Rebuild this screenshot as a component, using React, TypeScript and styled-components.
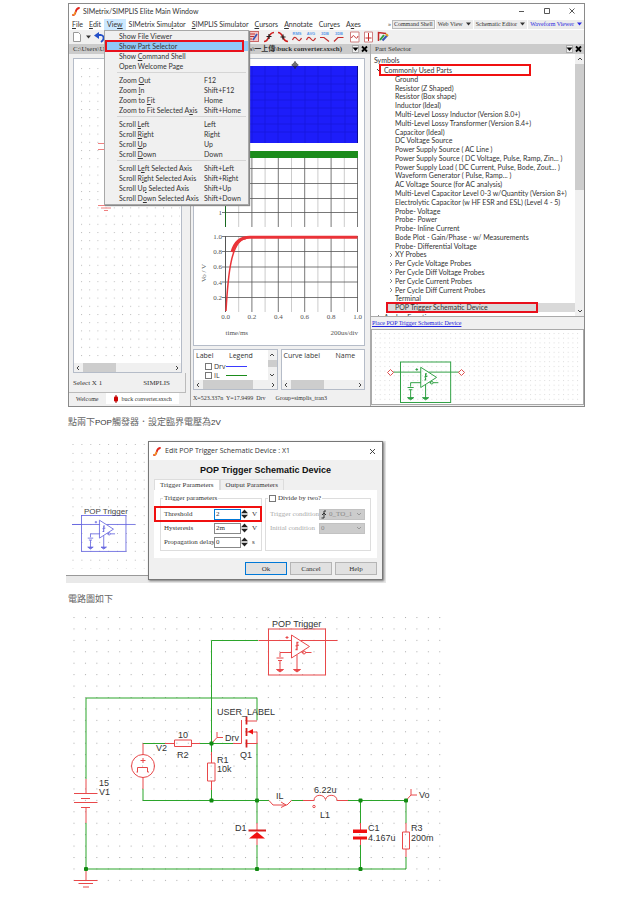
import React from "react";
import styled, { createGlobalStyle, css } from "styled-components";

const SANS = 'Lato, "Open Sans", sans-serif';
const WIDE_SANS = '"Open Sans", "Noto Sans", sans-serif';
const SERIF = '"Liberation Serif", "Noto Sans CJK TC", serif';
const ARIAL = '"Liberation Sans", "Noto Sans CJK TC", sans-serif';

const GlobalStyle = createGlobalStyle`
  * { box-sizing: border-box; }
  body { margin: 0; background: #fff; font-family: ${SANS}; font-size: 7px; color: #333; }
  button, input, select { font: inherit; color: inherit; margin: 0; padding: 0; border: 0; background: none; border-radius: 0; }
  svg { display: block; }
`;

/* ---------- article ---------- */

const Article = styled.main`
  padding: 3px 53px 0 66px;
`;

const Paragraph = styled.p`
  margin: 0 0 0 2px;
  font-family: ${ARIAL};
  font-size: 9px;
  line-height: 12px;
  color: #666;
  padding: ${(p: { $top: number; $bottom: number }) => `${p.$top}px 0 ${p.$bottom}px`};
`;

const Latin = styled.span`
  font-size: 8px;
  color: #333;
`;

/* ---------- main window ---------- */

const AppWindow = styled.figure`
  margin: 0 0 0 2px;
  border: 1px solid #8a8a8a;
  background: #f0f0f0;
`;

const TitleBar = styled.header`
  display: flex;
  align-items: center;
  height: 14px;
  padding: 0 8px 0 3px;
  gap: 3px;
  background: #fff;
`;

const TitleText = styled.span`
  flex: 1;
  line-height: 10px;
  white-space: nowrap;
`;

const WindowButtons = styled.div`
  display: flex;
  gap: 17px;
`;

const IconButton = styled.button`
  display: block;
  flex: none;
`;

const MenuBar = styled.nav`
  display: flex;
  align-items: center;
  height: 12px;
  background: #fff;
  line-height: 10px;
`;

const MenuSlot = styled.div`
  position: relative;
`;

const MenuButton = styled.button<{ $open?: boolean }>`
  display: block;
  height: 11px;
  padding: 0 3px;
  white-space: nowrap;
  background: ${(p) => (p.$open ? "#cce8ff" : "transparent")};
`;

const DropMenu = styled.div`
  position: absolute;
  z-index: 2;
  top: 11px;
  left: 0;
  width: 145px;
  padding: 0 0 1px;
  background: #f0f0f0;
  border: 1px solid #a8a8a8;
  box-shadow: 1px 1px 1px #888;
`;

const MenuItem = styled.button<{ $active?: boolean }>`
  position: relative;
  display: grid;
  grid-template-columns: 85px 1fr;
  width: 100%;
  height: 10px;
  padding-left: 14px;
  line-height: 10px;
  text-align: left;
  white-space: nowrap;
  background: ${(p) => (p.$active ? "#91c9f7" : "transparent")};
`;

const Divider = styled.hr`
  height: 1px;
  margin: 1px 2px 2px 12px;
  border: 0;
  background: #d5d5d5;
`;

const Callout = styled.span<{ $right: string; $left?: number; $color?: string }>`
  position: absolute;
  top: -1px;
  bottom: -1px;
  left: ${(p) => p.$left ?? 0}px;
  right: ${(p) => p.$right};
  border: 2px solid ${(p) => p.$color ?? "#e8101c"};
  pointer-events: none;
`;

const ViewSwitches = styled.div`
  display: flex;
  align-items: center;
  gap: 1px;
  margin-left: auto;
  font-family: ${SERIF};
  font-size: 6px;
  line-height: 8px;
`;

const ViewSwitch = styled.button<{ $blue?: boolean; $boxed?: boolean }>`
  display: flex;
  align-items: center;
  gap: 3px;
  height: 9px;
  padding: 0 1px;
  white-space: nowrap;
  background: #ececec;
  border: 1px solid ${(p) => (p.$boxed ? "#bbb" : "#ececec")};
  color: ${(p) => (p.$blue ? "#2a2ae0" : "#333")};
`;

const ToolBar = styled.div`
  display: flex;
  align-items: center;
  height: 14px;
  padding-left: 3px;
  gap: 2px;
`;

const ToolGroup = styled.div<{ $before?: number }>`
  display: flex;
  align-items: center;
  gap: 2px;
  margin-left: ${(p) => p.$before ?? 0}px;
`;

const Workspace = styled.div`
  display: grid;
  grid-template-columns: minmax(0, 121fr) minmax(0, 180fr) minmax(0, 214fr);
`;

const Pane = styled.section<{ $line?: boolean }>`
  display: flex;
  flex-direction: column;
  min-width: 0;
  ${(p) => p.$line && css`border-left: 1px solid #aaa;`}
`;

const PaneHeader = styled.div<{ $bold?: boolean }>`
  display: flex;
  align-items: center;
  justify-content: flex-end;
  height: 10px;
  padding: 0 2px 0 4px;
  gap: 2px;
  overflow: hidden;
  background: #cbcbcb;
  font-family: ${SERIF};
  font-weight: ${(p) => (p.$bold ? 700 : 400)};
  line-height: 10px;
  white-space: nowrap;
`;

const PaneTitle = styled.span<{ $grow?: boolean; $end?: number }>`
  flex: ${(p) => (p.$grow ? 1 : "none")};
  margin-right: ${(p) => p.$end ?? 0}px;
`;

const Sheet = styled.div`
  margin: 4px 8px 0 4px;
  border: 1px solid #b5bcc8;
  background: #fff;
`;

const HScroll = styled.div`
  display: flex;
  align-items: center;
  height: 9px;
  gap: 2px;
  padding: 0 1px;
  background: #f0f0f0;
`;

const HTrack = styled.div`
  flex: 1;
  height: 100%;
`;

const HThumb = styled.div<{ $share: number }>`
  width: ${(p) => p.$share}%;
  height: 100%;
  background: #cdcdcd;
`;

const StatusRow = styled.div`
  display: flex;
  align-items: center;
  justify-content: space-between;
  height: 20px;
  padding: 0 15px 0 4px;
  margin-right: 4px;
  border: solid #bbb;
  border-width: 0 1px 1px 0;
  font-family: ${SERIF};
`;

const FileTabs = styled.div`
  display: flex;
  height: 11px;
  align-items: stretch;
  font-family: ${SERIF};
  font-size: 6px;
`;

const FileTab = styled.button<{ $active?: boolean }>`
  display: flex;
  align-items: center;
  gap: 3px;
  padding: 0 7px;
  white-space: nowrap;
  background: ${(p) => (p.$active ? "#fff" : "transparent")};
`;

const PlotSheet = styled.div`
  margin: 4px 5px 0 2px;
  border: 1px solid #b5bcc8;
  background: #fff;
`;

const Legends = styled.div`
  display: grid;
  grid-template-columns: 1fr 1fr;
  gap: 3px;
  margin: 3px 5px 0 2px;
`;

const LegendBox = styled.div`
  display: flex;
  flex-direction: column;
  height: 41px;
  border: 1px solid #b5bcc8;
  background: #fff;
  font-family: ${WIDE_SANS};
`;

const LegendMain = styled.div`
  display: flex;
  flex: 1;
  min-height: 0;
`;

const LegendTable = styled.div`
  flex: 1;
  padding-left: 2px;
`;

const LegendHead = styled.div<{ $first: number }>`
  display: grid;
  grid-template-columns: ${(p) => p.$first}px 1fr;
  height: 12px;
  line-height: 12px;
  white-space: nowrap;
`;

const LegendRow = styled.label`
  display: grid;
  grid-template-columns: 8px 11px 21px;
  align-items: center;
  gap: 1px;
  height: 9px;
  padding-left: 9px;
  line-height: 9px;
`;

const Check = styled.input`
  appearance: none;
  flex: none;
  width: 7px;
  height: 7px;
  border: 1px solid #777;
  background: #fff;
`;

const LegendLine = styled.span<{ $color: string }>`
  height: 1px;
  background: ${(p) => p.$color};
`;

const VScroll = styled.div`
  display: flex;
  flex-direction: column;
  align-items: center;
  justify-content: space-between;
  width: 9px;
  flex: none;
  padding: 2px 0;
  background: #f0f0f0;
`;

const VTrack = styled.div`
  flex: 1;
  width: 100%;
  margin: 2px 0;
`;

const VThumb = styled.div<{ $share: number }>`
  height: ${(p) => p.$share}%;
  background: #cdcdcd;
`;

const CoordRow = styled.div`
  display: flex;
  gap: 10px;
  align-items: center;
  height: 16px;
  padding-left: 2px;
  font-family: ${SERIF};
  font-size: 6px;
  white-space: nowrap;
`;

const TreeFrame = styled.div`
  display: flex;
  height: 263px;
  background: #fff;
  border-bottom: 1px solid #aaa;
`;

const Tree = styled.div`
  flex: 1;
  min-width: 0;
  overflow: hidden;
  padding: 1px 0 0 2px;
  line-height: 9px;
`;

const TreeTop = styled.div`
  height: 10px;
  padding-left: 1px;
  line-height: 11px;
`;

const TreeGroup = styled.button`
  position: relative;
  display: flex;
  align-items: center;
  width: 100%;
  height: 10px;
  gap: 2px;
  padding-left: 3px;
  line-height: 10px;
`;

const TreeRows = styled.div`
  display: grid;
  grid-auto-rows: 1fr;
  height: 237px;
`;

const TreeRow = styled.button<{ $on?: boolean }>`
  position: relative;
  display: flex;
  align-items: center;
  min-height: 0;
  gap: 3px;
  margin-left: 15px;
  text-align: left;
  white-space: nowrap;
  background: ${(p) => (p.$on ? "#d9d9d9" : "transparent")};
`;

const Twist = styled.span`
  flex: none;
  width: 4px;
`;

const PlaceLink = styled.a`
  height: 12px;
  padding-left: 1px;
  font-family: ${SERIF};
  font-size: 6px;
  line-height: 12px;
  color: #2222dd;
`;

const Preview = styled.div`
  border: 1px solid #aaa;
  background: #fff;
`;

/* ---------- dialog ---------- */

const DialogFigure = styled.figure`
  display: grid;
  grid-template-columns: 82fr 235fr;
  max-width: 320px;
  margin: 0;
  padding: 0 3px 3px 0;
  background: #e9e9e9;
`;

const Board = styled.div`
  background: #fff;
  border-bottom: 1px solid #999;
  margin-bottom: 4px;
`;

const Dialog = styled.form`
  border: 1px solid #777;
  background: #f0f0f0;
  box-shadow: 1px 1px 2px #777;
  font-family: ${SERIF};
`;

const DialogTitle = styled.header`
  display: flex;
  align-items: center;
  height: 18px;
  gap: 4px;
  padding: 0 6px 0 4px;
  background: #fff;
  font-family: ${WIDE_SANS};
`;

const DialogHeading = styled.h2`
  margin: 0;
  height: 19px;
  font: 700 9px/20px ${ARIAL};
  color: #111;
  text-align: center;
`;

const Tabs = styled.div`
  display: flex;
  height: 11px;
  padding-left: 5px;
`;

const Tab = styled.button<{ $on?: boolean }>`
  padding: 0 5px;
  border: 1px solid #ddd;
  border-bottom: 0;
  white-space: nowrap;
  background: ${(p) => (p.$on ? "#fff" : "#f0f0f0")};
`;

const TabPanel = styled.div`
  display: grid;
  grid-template-columns: 102fr 106fr;
  gap: 3px;
  height: 68px;
  margin: 0 5px;
  padding: 4px 6px 7px;
  background: #fff;
`;

const Group = styled.fieldset`
  min-width: 0;
  margin: 0;
  padding: 4px 0 0;
  border: 1px solid #ddd;
`;

const Legend = styled.legend`
  display: flex;
  align-items: center;
  gap: 2px;
  height: 9px;
  margin-left: 2px;
  padding: 0 1px;
  line-height: 9px;
`;

const LegendLabel = styled.label`
  display: flex;
  align-items: center;
  gap: 2px;
`;

const Field = styled.label`
  position: relative;
  display: grid;
  grid-template-columns: 50px 27px 7px 1fr;
  align-items: center;
  height: 14px;
  padding-left: 3px;
  white-space: nowrap;
`;

const Entry = styled.input<{ $focus?: boolean }>`
  width: 27px;
  height: 11px;
  border: 1px solid ${(p) => (p.$focus ? "#0078d7" : "#888")};
  background: #fff;
  padding-left: 1px;
`;

const Unit = styled.span`
  padding-left: 4px;
`;

const Choice = styled.label`
  display: grid;
  grid-template-columns: 49px 1fr;
  align-items: center;
  height: 14px;
  padding: 0 5px 0 4px;
  color: #aaa;
  white-space: nowrap;
`;

const SelectWrap = styled.span`
  position: relative;
  display: flex;
  align-items: center;
  justify-content: flex-end;
  height: 11px;
  padding-right: 2px;
  background: #ccc;
  border: 1px solid #c2c2c2;
  color: #888;
`;

const Select = styled.select<{ $indent?: boolean }>`
  appearance: none;
  flex: 1;
  min-width: 0;
  height: 9px;
  padding-left: ${(p) => (p.$indent ? 2 : 1)}px;
  line-height: 9px;
  opacity: 1;
`;

const Buttons = styled.div`
  display: flex;
  justify-content: flex-end;
  gap: 3px;
  padding: 4px 5px;
`;

const PushButton = styled.button<{ $primary?: boolean }>`
  width: 42px;
  height: 13px;
  background: #e1e1e1;
  border: 1px solid ${(p) => (p.$primary ? "#0078d7" : "#b5b5b5")};
`;

const Circuit = styled.svg`
  width: 100%;
  max-width: 384px;
  font-family: ${ARIAL};
  font-size: 9px;
`;

const Drawing = styled.svg`
  width: 100%;
  font-family: ${(p: { $serif?: boolean }) => (p.$serif ? SERIF : ARIAL)};
`;

/* ---------- icons ---------- */

const Logo = () => (
  <svg width="8" height="9" viewBox="0 0 8 9" fill="none" strokeLinecap="round">
    <path d="M1 8C5 8 2 2 7 1" stroke="#e0251b" strokeWidth="1.8" />
    <path d="M1 8C3 8 3 6 3.4 5" stroke="#f5a623" strokeWidth="1.2" />
  </svg>
);

const Chevron = ({ dir, color = "#444" }: { dir: "left" | "right" | "up" | "down"; color?: string }) => {
  const d = { left: "M4 1L2 3L4 5", right: "M2 1L4 3L2 5", up: "M1 4L3 2L5 4", down: "M1 2L3 4L5 2" }[dir];
  return (
    <svg width="6" height="6" viewBox="0 0 6 6" fill="none" stroke={color}>
      <path d={d} />
    </svg>
  );
};

const Caret = () => (
  <svg width="5" height="4" viewBox="0 0 5 4">
    <path d="M0 .5H5L2.5 3.5Z" fill="currentColor" />
  </svg>
);

const PaneMenuIcon = () => (
  <svg width="7" height="8" viewBox="0 0 7 8">
    <rect x=".5" y=".5" width="6" height="7" fill="#eee" stroke="#aaa" />
    <path d="M.5 2.5H6.5L3.5 6Z" fill="#000" />
  </svg>
);

const PaneCloseIcon = () => (
  <svg width="7" height="8" viewBox="0 0 7 8" stroke="#000" strokeWidth="1.8">
    <path d="M1 1.5L6 6.5M6 1.5L1 6.5" />
  </svg>
);

const tool = { width: 12, height: 12, viewBox: "0 0 12 12", fill: "none" } as const;

const CurveTag = ({ tag, d }: { tag: string; d: string }) => (
  <svg {...tool}>
    <text x="6" y="4" fontSize="4" fontWeight="700" textAnchor="middle" fontFamily="Liberation Sans" fill="#5b9be8">
      {tag}
    </text>
    <path d={d} stroke="#c22a2a" strokeWidth="1.2" />
  </svg>
);

const SINE = "M1.5 9C3 5.5 4.5 6 6 8S9 10.5 10.5 7";

/* ---------- schematic symbols ---------- */

const PopSymbol = ({ color, x, y, scale = 1 }: { color: string; x: number; y: number; scale?: number }) => (
  <g transform={`translate(${x} ${y}) scale(${scale})`} fill="none" stroke={color} strokeWidth={1 / Math.max(scale, 0.9)}>
    <rect x="0" y="0" width="57" height="46" />
    <path d="M-10 11.5H23M32 11.5H69" />
    <path d="M23 6V29L41 17.5ZM17 8.5H20M18.5 7V10" />
    <path d="M23 23.5H11.5V28M8 29H15M9.5 31.5H13.5M11.5 31.5V41M28.5 26V41M33 23.5H35M37 23.5H43" />
    <circle cx="35.5" cy="23.5" r="1.5" />
    <path d="M30 13.5H28.5V20.5H27M27 17L30.5 16" strokeWidth="1.3" />
    <path d="M8 40.5H15L11.5 43ZM25 40.5H32L28.5 43Z" fill={color} />
  </g>
);

const Dots = ({ id, x, y, step, color = "#aaa" }: { id: string; x: number; y: number; step: number; color?: string }) => (
  <pattern id={id} x={x} y={y} width={step} height={step} patternUnits="userSpaceOnUse">
    <rect width="1" height="1" fill={color} />
  </pattern>
);

/* ---------- data ---------- */

const menuGroups: [string, string, string?][][] = [
  [["Show ", "F|ile Viewer"], ["Show ", "P|art Selector"], ["Show ", "C|ommand Shell"], ["Open Welcome Page", "|"]],
  [["Zoom ", "O|ut", "F12"], ["Zoom ", "I|n", "Shift+F12"], ["Zoom to ", "F|it", "Home"], ["Zoom to Fit Selected A", "x|is", "Shift+Home"]],
  [["Scroll ", "L|eft", "Left"], ["Scroll ", "R|ight", "Right"], ["Scroll ", "U|p", "Up"], ["Scroll ", "D|own", "Down"]],
  [["Scroll L", "e|ft Selected Axis", "Shift+Left"], ["Scroll R", "i|ght Selected Axis", "Shift+Right"], ["Scroll U", "p| Selected Axis", "Shift+Up"], ["Scroll D", "o|wn Selected Axis", "Shift+Down"]],
];

const Mnemonic = ({ before, rest }: { before: string; rest: string }) => {
  const [key, after] = rest.split("|");
  return (
    <span>
      {before}
      <u>{key}</u>
      {after}
    </span>
  );
};

const parts = [
  "Ground", "Resistor (Z Shaped)", "Resistor (Box shape)", "Inductor (Ideal)",
  "Multi-Level Lossy Inductor (Version 8.0+)", "Multi-Level Lossy Transformer (Version 8.4+)",
  "Capacitor (Ideal)", "DC Voltage Source", "Power Supply Source ( AC Line )",
  "Power Supply Source ( DC Voltage, Pulse, Ramp, Zin... )", "Power Supply Load ( DC Current, Pulse, Bode, Zout... )",
  "Waveform Generator ( Pulse, Ramp... )", "AC Voltage Source (for AC analysis)",
  "Multi-Level Capacitor Level 0-3 w/Quantity (Version 8+)", "Electrolytic Capacitor (w HF ESR and ESL) (Level 4 - 5)",
  "Probe- Voltage", "Probe- Power", "Probe- Inline Current", "Bode Plot - Gain/Phase - w/ Measurements",
  "Probe- Differential Voltage", ">XY Probes", ">Per Cycle Voltage Probes", ">Per Cycle Diff Voltage Probes",
  ">Per Cycle Current Probes", ">Per Cycle Diff Current Probes", "Terminal", "POP Trigger Schematic Device",
];

/* ---------- panes ---------- */

const Scroller = ({ share }: { share: number }) => (
  <HScroll>
    <Chevron dir="left" />
    <HTrack>
      <HThumb $share={share} />
    </HTrack>
    <Chevron dir="right" />
  </HScroll>
);

const SchematicPane = () => (
  <Pane>
    <PaneHeader>
      <PaneTitle $grow>C:\Users\USER\Desktop\buck</PaneTitle>
    </PaneHeader>
    <Sheet>
      <Drawing viewBox="74 59 107 304">
        <defs>
          <Dots id="dots-left" x={81} y={68} step={8.2} color="#bbb" />
        </defs>
        <rect x="78" y="64" width="102" height="298" fill="url(#dots-left)" />
        <path d="M98 143.5H110M98 149.5H110M98 205.5H114M101 208H111M104 210.5H108" stroke="#f08080" />
      </Drawing>
      <Scroller share={37} />
    </Sheet>
    <StatusRow>
      <span>Select X 1</span>
      <span>SIMPLIS</span>
    </StatusRow>
    <FileTabs>
      <FileTab>Welcome</FileTab>
      <FileTab $active>
        <svg width="6" height="8" viewBox="0 0 6 8">
          <path d="M3 0V8" stroke="#900" />
          <rect x="1" y="1.5" width="4" height="5" rx="1" fill="#c00" />
        </svg>
        buck converter.sxsch
      </FileTab>
    </FileTabs>
  </Pane>
);

const majors = [0, 1, 2, 3, 4, 5].map((n) => 225.5 + n * 26.4);
const minors = [0, 1, 2, 3, 4].map((n) => 238.7 + n * 26.4);

const Plot = () => (
  <Drawing $serif viewBox="194 59 170 286" fontSize="7" fill="#555">
    <g stroke="#ccc">
      {minors.map((x) => (
        <path key={x} d={`M${x} 158V227M${x} 236V312`} />
      ))}
    </g>
    <g stroke="#555" strokeWidth=".8">
      {majors.map((x) => (
        <path key={x} d={`M${x} 158V227M${x} 236V312`} />
      ))}
      <path d="M222 168.5H358M222 183.5H358M222 198.5H358M222 212.5H358M222 236.5H358M222 251.5H358M222 267H358M222 282H358M222 297.5H358" />
    </g>
    <path d="M225.5 158V227" stroke="#17691f" />
    <rect x="225" y="66" width="133" height="77" fill="#1d1dfa" />
    <g stroke="#1818dc" strokeWidth=".8">
      {[238, 252, 265, 278, 291, 305, 318, 331, 345].map((x) => (
        <path key={x} d={`M${x} 66V143`} />
      ))}
      {[76, 84, 92, 100, 108, 116, 124, 132].map((y) => (
        <path key={y} d={`M225 ${y}H358`} />
      ))}
    </g>
    <path d="M357.5 66V143" stroke="#0c0c90" />
    <rect x="225" y="151" width="133" height="7" fill="#1b8c1b" />
    <g stroke="#222" fill="none" strokeWidth=".8">
      <circle cx="295" cy="65" r="2.2" />
      <path d="M295 61V69M291.5 65H298.5" />
    </g>
    <path d="M225.5 236V312" stroke="#555" />
    <path d="M226 311C228 275 231 240 246 238.5" stroke="#ea3338" strokeWidth="1.5" fill="none" />
    <path d="M232 252C235 242 240 237.5 250 237.3H357.5" stroke="#ea3338" strokeWidth="3" fill="none" />
    <g textAnchor="end">
      <text x="222" y="215">1</text>
      {["1.0", "0.8", "0.6", "0.4", "0.2"].map((t, i) => (
        <text key={t} x="222" y={239 + i * 15.2}>{t}</text>
      ))}
    </g>
    <g textAnchor="middle">
      {["0.0", "0.2", "0.4", "0.6", "0.8", "1.0"].map((t, i) => (
        <text key={t} x={225.5 + i * 26.4} y="318.5">{t}</text>
      ))}
      <text transform="translate(206 273) rotate(-90)">Vo / V</text>
    </g>
    <text x="225.5" y="335">time/ms</text>
    <text x="358" y="335" textAnchor="end">200us/div</text>
  </Drawing>
);

const WaveformPane = () => (
  <Pane $line>
    <PaneHeader $bold>
      <PaneTitle $end={8}>(C:\Users\一上傳\buck converter.sxsch)</PaneTitle>
      <PaneMenuIcon />
      <PaneCloseIcon />
    </PaneHeader>
    <PlotSheet>
      <Plot />
    </PlotSheet>
    <Legends>
      <LegendBox>
        <LegendMain>
          <LegendTable>
            <LegendHead $first={33}>
              <span>Label</span>
              <span>Legend</span>
            </LegendHead>
            <LegendRow>
              <Check type="checkbox" />
              Drv
              <LegendLine $color="#3a3aff" />
            </LegendRow>
            <LegendRow>
              <Check type="checkbox" />
              IL
              <LegendLine $color="#1b8c1b" />
            </LegendRow>
          </LegendTable>
          <VScroll>
            <Chevron dir="up" />
            <VTrack>
              <VThumb $share={70} />
            </VTrack>
            <Chevron dir="down" />
          </VScroll>
        </LegendMain>
        <Scroller share={78} />
      </LegendBox>
      <LegendBox>
        <LegendMain>
          <LegendTable>
            <LegendHead $first={52}>
              <span>Curve label</span>
              <span>Name</span>
            </LegendHead>
          </LegendTable>
        </LegendMain>
        <Scroller share={52} />
      </LegendBox>
    </Legends>
    <CoordRow>
      <span>X=523.337n&nbsp; Y=17.9499&nbsp; Drv</span>
      <span>Group=simplis_tran3</span>
    </CoordRow>
  </Pane>
);

const PartSelectorPane = () => (
  <Pane $line>
    <PaneHeader>
      <PaneTitle $grow>Part Selector</PaneTitle>
      <PaneMenuIcon />
      <PaneCloseIcon />
    </PaneHeader>
    <TreeFrame>
      <Tree>
        <TreeTop>Symbols</TreeTop>
        <TreeGroup>
          <Chevron dir="down" />
          Commonly Used Parts
          <Callout $left={6} $right="44px" $color="#f01010" />
        </TreeGroup>
        <TreeRows>
          {parts.map((name) => {
            const branch = name.startsWith(">");
            const picked = name.startsWith("POP");
            return (
              <TreeRow key={name} $on={picked}>
                <Twist>{branch && <Chevron dir="right" color="#888" />}</Twist>
                {branch ? name.slice(1) : name}
                {picked && <Callout $left={-2} $right="37px" />}
              </TreeRow>
            );
          })}
        </TreeRows>
        <TreeGroup>
          <Chevron dir="right" color="#888" />
          Analog Functions
        </TreeGroup>
      </Tree>
      <VScroll>
        <Chevron dir="up" />
        <VTrack>
          <VThumb $share={52} />
        </VTrack>
        <Chevron dir="down" />
      </VScroll>
    </TreeFrame>
    <PlaceLink href="#place">Place POP Trigger Schematic Device</PlaceLink>
    <Preview>
      <Drawing viewBox="372 329 211 74">
        <defs>
          <Dots id="dots-preview" x={375} y={332} step={4.7} color="#ddd" />
        </defs>
        <rect x="374" y="331" width="207" height="71" fill="url(#dots-preview)" />
        <PopSymbol color="#2ea043" x={400.5} y={361} scale={0.88} />
        <path d="M387.5 371.5L390.5 368.5L393.5 371.5L390.5 374.5ZM458.500 371.5L461.5 368.5L464.5 371.5L461.5 374.5Z" fill="#fff" stroke="#e05050" />
      </Drawing>
    </Preview>
  </Pane>
);

const topMenus = ["|F|ile", "|E|dit", "View", "SIMetrix Simu|l|ator", "|S|IMPLIS Simulator", "|C|ursors", "|A|nnotate", "Cur|v|es", "A|x|es"];

const MainWindow = () => (
  <AppWindow>
    <TitleBar>
      <Logo />
      <TitleText>SIMetrix/SIMPLIS Elite Main Window</TitleText>
      <WindowButtons>
        {["M1 4.5H6", "M1.5 1.5H6.5V6.5H1.5Z", "M1.5 1.5L6.5 6.5M6.5 1.5L1.5 6.5"].map((d, i) => (
          <IconButton key={d} type="button" aria-label={["Minimize", "Maximize", "Close"][i]}>
            <svg width="8" height="8" viewBox="0 0 8 8" fill="none" stroke="#444" strokeWidth=".9">
              <path d={d} />
            </svg>
          </IconButton>
        ))}
      </WindowButtons>
    </TitleBar>
    <MenuBar>
      {topMenus.map((entry) => {
        if (entry === "View")
          return (
            <MenuSlot key={entry}>
              <MenuButton $open>
                Vie<u>w</u>
              </MenuButton>
              <DropMenu>
                {menuGroups.map((group, g) => (
                  <React.Fragment key={g}>
                    {g > 0 && <Divider />}
                    {group.map(([before, rest, keys], i) => (
                      <MenuItem key={i} $active={g === 0 && i === 1}>
                        <Mnemonic before={before} rest={rest} />
                        <span>{keys}</span>
                        {g === 0 && i === 1 && <Callout $right="4px" />}
                      </MenuItem>
                    ))}
                  </React.Fragment>
                ))}
              </DropMenu>
            </MenuSlot>
          );
        const [a, b, c] = entry.split("|");
        return (
          <MenuButton key={entry}>
            {a}
            <u>{b}</u>
            {c}
          </MenuButton>
        );
      })}
      <ViewSwitches>
        <span>»</span>
        <ViewSwitch $boxed>Command Shell</ViewSwitch>
        <ViewSwitch>Web View <Caret /></ViewSwitch>
        <ViewSwitch>Schematic Editor <Caret /></ViewSwitch>
        <ViewSwitch $blue>Waveform Viewer <Caret /></ViewSwitch>
      </ViewSwitches>
    </MenuBar>
    <ToolBar>
      <ToolGroup>
        <svg {...tool}>
          <path d="M1.5 1.5H6.5L8.5 3.5V10.5H1.5Z" fill="#fff" stroke="#999" />
        </svg>
        <Caret />
        <svg {...tool}>
          <path d="M5 4H8C12 5 11 9 8 11" stroke="#2450c8" strokeWidth="1.8" />
          <path d="M1 4.5L6 1V8Z" fill="#2450c8" />
        </svg>
      </ToolGroup>
      <ToolGroup $before={140}>
        <svg {...tool}>
          <rect x=".5" y=".5" width="11" height="10" fill="#f6c6c6" stroke="#c66" />
          <path d="M2 3H8M2 5.5H7M2 8H5" stroke="#b33" />
          <path d="M6 9L10 3" stroke="#3a57b5" strokeWidth="1.8" />
        </svg>
      </ToolGroup>
      <ToolGroup $before={2}>
        <svg {...tool}>
          <path d="M1 10.5C7 10.5 4 2 11 1.5" stroke="#d02020" strokeWidth="1.5" />
          <path d="M3.5 5.5H8.5M6 3V8" stroke="#222" strokeWidth="1.2" />
        </svg>
        <svg {...tool}>
          <path d="M1 1.5C7 1.5 4 10 11 10.5" stroke="#d02020" strokeWidth="1.5" />
          <path d="M3.5 6H8.5M6 3.5V8.5" stroke="#222" strokeWidth="1.2" />
        </svg>
        <CurveTag tag="RMS" d={SINE} />
        <CurveTag tag="AVG" d={SINE} />
        <CurveTag tag="3DB" d="M1 6.5H5L10 10.5" />
        <CurveTag tag="3DB" d="M1 10.5L5 6.5H10.5" />
      </ToolGroup>
      <ToolGroup $before={2}>
        <svg {...tool}>
          <path d="M1.5 1H10V11H1.5Z" fill="#fff" stroke="#d08080" />
          <path d="M2.5 7C4 3.5 5 4.5 6 6S8 8 9 5" stroke="#c22a2a" />
        </svg>
        <svg {...tool}>
          <path d="M1.5 1H9.5V11H1.5Z" fill="#fff" stroke="#d08080" />
          <path d="M5.5 2V10M2.5 7H8.5" stroke="#c22a2a" />
        </svg>
        <svg {...tool}>
          <path d="M1.5 10V1.5L9 2.5" stroke="#c22a2a" strokeWidth="1.5" />
          <path d="M3 9L7 4" stroke="#2e9e3e" strokeWidth="2" />
          <path d="M5.5 9.5L10.5 4" stroke="#3a57b5" strokeWidth="2" />
          <path d="M9 3L11 5" stroke="#e0a020" strokeWidth="2" />
        </svg>
      </ToolGroup>
    </ToolBar>
    <Workspace>
      <SchematicPane />
      <WaveformPane />
      <PartSelectorPane />
    </Workspace>
  </AppWindow>
);

/* ---------- parameter dialog ---------- */

const SpinArrows = () => (
  <svg width="7" height="10" viewBox="0 0 7 10">
    <path d="M0 4.2H7L3.5 .5ZM0 5.8H7L3.5 9.5Z" fill="#222" />
  </svg>
);

const fields = [
  ["Threshold", "2", "V"],
  ["Hysteresis", "2m", "V"],
  ["Propagation delay", "0", "s"],
];

const ParameterDialog = () => (
  <DialogFigure>
    <Board>
      <Drawing viewBox="66 440 82 134" fontSize="8">
        <defs>
          <Dots id="dots-board" x={72.5} y={443} step={8.9} color="#bbb" />
        </defs>
        <rect x="70" y="442" width="78" height="126" fill="url(#dots-board)" />
        <PopSymbol color="#6a6ae0" x={81.5} y={514.5} scale={0.78} />
        <path d="M72 523.5H82" stroke="#6a6ae0" />
        <text x="84" y="512.5" fill="#444">POP Trigger</text>
      </Drawing>
    </Board>
    <Dialog onSubmit={(e) => e.preventDefault()}>
      <DialogTitle>
        <Logo />
        <TitleText>Edit POP Trigger Schematic Device : X1</TitleText>
        <IconButton type="button" aria-label="Close dialog">
          <svg width="7" height="7" viewBox="0 0 7 7" stroke="#333" strokeWidth=".9">
            <path d="M1 1L6 6M6 1L1 6" />
          </svg>
        </IconButton>
      </DialogTitle>
      <DialogHeading>POP Trigger Schematic Device</DialogHeading>
      <Tabs>
        <Tab type="button" $on>Trigger Parameters</Tab>
        <Tab type="button">Output Parameters</Tab>
      </Tabs>
      <TabPanel>
        <Group>
          <Legend>Trigger parameters</Legend>
          {fields.map(([label, value, unit], i) => (
            <Field key={label}>
              {label}
              <Entry defaultValue={value} $focus={i === 0} />
              <SpinArrows />
              <Unit>{unit}</Unit>
              {i === 0 && <Callout $left={-7} $right="-1px" $color="#f01010" />}
            </Field>
          ))}
        </Group>
        <Group>
          <Legend>
            <LegendLabel>
              <Check type="checkbox" />
              Divide by two?
            </LegendLabel>
          </Legend>
          <Choice>
            Trigger condition
            <SelectWrap>
              <svg width="7" height="9" viewBox="0 0 7 9" fill="none" stroke="#333">
                <path d="M6 1H4V8H1.5M2 5L4 3L6 5" />
              </svg>
              <Select disabled $indent>
                <option>0_TO_1</option>
              </Select>
              <Chevron dir="down" color="#999" />
            </SelectWrap>
          </Choice>
          <Choice>
            Initial condition
            <SelectWrap>
              <Select disabled>
                <option>0</option>
              </Select>
              <Chevron dir="down" color="#999" />
            </SelectWrap>
          </Choice>
        </Group>
      </TabPanel>
      <Buttons>
        <PushButton $primary>Ok</PushButton>
        <PushButton type="button">Cancel</PushButton>
        <PushButton type="button">Help</PushButton>
      </Buttons>
    </Dialog>
  </DialogFigure>
);

/* ---------- converter circuit ---------- */

const nodes = [[211.5, 743.5], [211.5, 800.5], [257, 800.5], [257, 869], [360.5, 800.5], [360.5, 869], [406, 800.5], [86, 869]];

const labels: [number, number, string][] = [
  [272, 627, "POP Trigger"], [217, 715, "USER_LABEL"], [225, 741, "Drv"], [178, 738, "10"], [177, 758, "R2"],
  [156, 751, "V2"], [240, 758, "Q1"], [217, 763, "R1"], [217, 772, "10k"], [99, 786, "15"], [99, 795, "V1"],
  [276, 799, "IL"], [314, 793, "6.22u"], [320, 818, "L1"], [235, 831, "D1"], [368, 831, "C1"], [368, 841, "4.167u"],
  [411, 831, "R3"], [411, 841, "200m"], [419, 798, "Vo"],
];

const ConverterCircuit = () => (
  <Circuit viewBox="66 610 384 284">
    <defs>
      <Dots id="dots-main" x={73.5} y={617} step={11.43} />
    </defs>
    <rect x="72" y="616" width="370" height="266" fill="url(#dots-main)" />
    <g stroke="#2ba52b" fill="none">
      <path d="M258 640.5H211.5V752M86 779V698H257V720M143 743.5H165M200 743.5H233" />
      <path d="M143 789V800.5H269M211.5 790V800.5M257 743V823M257 845V869M291.5 800.5H303M348 800.5H406V823" />
      <path d="M360.5 800.5V823M360.5 845V869M406 857V869H86V823" />
    </g>
    <g stroke="#e8484a" fill="none">
      <path d="M86 779V793M74 793.5H97.5M81 798.5H90M74 802.5H97.5M81 807.5H90M86 808V823M86 869V880.5M74 880.5H97.5M78.5 883.5H93M83 887H89" />
      <path d="M143 743.5V754.5M143 777.5V789M165 743.5H174.5M191.5 743.5H200M174.5 740H191.5V746.5H174.5Z" />
      <circle cx="143" cy="766" r="11.5" />
      <path d="M137.5 772V767.5H147.5V772M147.5 772H149M136.5 772H138M140.5 760.5H145.5M143 758V763" />
      <path d="M211.5 752V763M207.5 763H215V781H207.5ZM211.5 781V790" />
      <path d="M211.5 743.5L217 737.5V732M217 737.5H223M233 743.5H241.5V720M247 721H257M247 732H257V743.5H247" />
      <path d="M257 823V830M257 838V845M269 800.5L273 805H287L291.5 800.5M281 802L286 805L281 807.5" />
      <path d="M303 800.5H314C314 794 324 793.5 325.5 799.5C327 793.5 337 794 337 800.5H348" />
      <circle cx="314" cy="806.5" r="1.2" />
      <path d="M360.5 823V830M360.5 839V845M406 823V832M402.5 832H409.5V849H402.5ZM406 849V857M406 800.5L411 795V789M411 795H417" />
    </g>
    <g stroke="#d81e1e" strokeWidth="1.8">
      <path d="M246.5 716.5V724.5M246.5 728V736M246.5 739.5V747.5M248.5 830.5H266" />
    </g>
    <g fill="#f01010">
      <path d="M248 731.5L253 729V734.5ZM257 832L249 838.5H265Z" />
      <path d="M353 829.5H367V833H353ZM353 836.5H367V839.5H353Z" />
    </g>
    <PopSymbol color="#e8484a" x={268.5} y={629} />
    {nodes.map(([x, y]) => (
      <rect key={`${x}-${y}`} x={x - 2} y={y - 2} width="4" height="4" rx="1" fill="#128a12" />
    ))}
    <g fill="#333">
      {labels.map(([x, y, t]) => (
        <text key={`${t}${x}`} x={x} y={y}>{t}</text>
      ))}
    </g>
  </Circuit>
);

export default function App() {
  return (
    <>
      <GlobalStyle />
      <Article>
        <MainWindow />
        <Paragraph $top={9} $bottom={12}>
          點兩下<Latin>POP</Latin>觸發器．設定臨界電壓為<Latin>2V</Latin>
        </Paragraph>
        <ParameterDialog />
        <Paragraph $top={10} $bottom={5}>電路圖如下</Paragraph>
        <ConverterCircuit />
      </Article>
    </>
  );
}
